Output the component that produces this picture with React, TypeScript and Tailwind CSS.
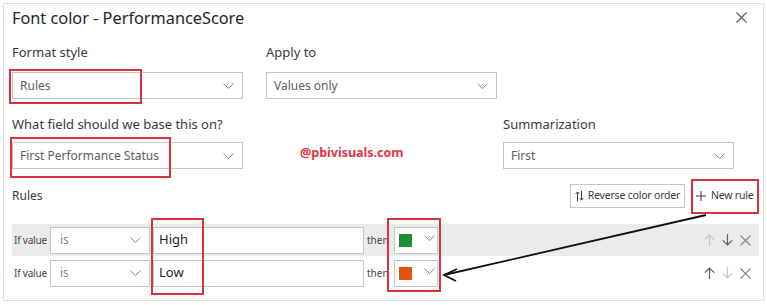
import React from "react";

const Chevron = ({ className = "" }: { className?: string }) => (
  <svg width="11" height="6" viewBox="0 0 11 6" className={className} fill="none" stroke="currentColor" strokeWidth="1">
    <path d="M0.5 0.5 L5.5 5.5 L10.5 0.5" />
  </svg>
);

const Cross = ({ size = 11 }: { size?: number }) => (
  <svg width={size} height={size} viewBox="0 0 11 11" fill="none" stroke="currentColor" strokeWidth="1.2">
    <path d="M0.5 0.5 L10.5 10.5 M10.5 0.5 L0.5 10.5" />
  </svg>
);

const ArrowUp = ({ className = "" }: { className?: string }) => (
  <svg width="11" height="12" viewBox="0 0 11 12" className={className} fill="none" stroke="currentColor" strokeWidth="1.2">
    <path d="M5.5 1 V12 M0.8 5.7 L5.5 1 L10.2 5.7" />
  </svg>
);

const ArrowDown = ({ className = "" }: { className?: string }) => (
  <svg width="11" height="12" viewBox="0 0 11 12" className={className} fill="none" stroke="currentColor" strokeWidth="1.2">
    <path d="M5.5 0 V11 M0.8 6.3 L5.5 11 L10.2 6.3" />
  </svg>
);

function Select({ value }: { value: string }) {
  return (
    <div className="w-[231px] h-[27px] border border-[#c8c6c4] bg-white flex items-center justify-between pl-[7px] pr-[8px] text-[12px] text-[#605e5c]">
      <span>{value}</span>
      <Chevron className="text-[#8a8886]" />
    </div>
  );
}

function RuleRow({ value, color, gray, upOn }: { value: string; color: string; gray?: boolean; upOn: boolean }) {
  return (
    <div className={`h-[32px] flex items-center ${gray ? "bg-[#ebebeb]" : "bg-white"}`}>
      <span className="w-[38px] pl-[2px] whitespace-nowrap text-[10px] tracking-[-0.2px] text-[#484644]">If value</span>
      <div className="w-[100px] h-[27px] border border-[#c8c6c4] bg-white flex items-center justify-between pl-[9px] pr-[8px] text-[12px] text-[#8a8886]">
        <span>is</span>
        <Chevron className="text-[#8a8886]" />
      </div>
      <div className="ml-[3px] w-[211px] h-[27px] border border-[#c8c6c4] bg-white flex items-center pl-[5px] text-[13px] text-[#252423]">
        {value}
      </div>
      <span className="ml-[3px] w-[27px] whitespace-nowrap text-[10px] text-[#484644]">then</span>
      <div className="w-[44px] h-[27px] border border-[#c8c6c4] bg-white flex items-start pl-[4px] pt-[6px] gap-[12px]">
        <div className={`w-[13px] h-[13px] ${color}`} />
        <Chevron className="text-[#8a8886] mt-[1px]" />
      </div>
      <div className="ml-auto mr-[8px] flex items-center gap-[7px]">
        <ArrowUp className={upOn ? "text-[#605e5c]" : "text-[#c8c6c4]"} />
        <ArrowDown className={upOn ? "text-[#c8c6c4]" : "text-[#605e5c]"} />
        <span className="text-[#8a8886]"><Cross size={11} /></span>
      </div>
    </div>
  );
}

export default function App() {
  return (
    <div className="relative w-[767px] h-[305px] bg-white p-[3px] pb-[4px] font-['Segoe_UI','Noto_Sans',sans-serif]">
      <div className="h-full border border-[#e1dfdd] pl-[8px] pr-[4px]">
        <div className="flex items-center justify-between h-[26px] pt-[1px]">
          <h1 className="text-[16.3px] text-[#252423] leading-[24px]">Font color - PerformanceScore</h1>
          <span className="mr-[12px] text-[#605e5c]"><Cross size={11} /></span>
        </div>

        <div className="flex mt-[13px]">
          <div className="w-[230px]">
            <div className="text-[13px] text-[#3b3a39] leading-[18px]">Format style</div>
            <div className="mt-[11px]"><Select value="Rules" /></div>
          </div>
          <div className="ml-[24px] w-[231px]">
            <div className="text-[13px] text-[#3b3a39] leading-[18px]">Apply to</div>
            <div className="mt-[11px]"><Select value="Values only" /></div>
          </div>
        </div>

        <div className="flex mt-[16px]">
          <div className="w-[230px]">
            <div className="text-[13px] text-[#3b3a39] leading-[18px]">What field should we base this on?</div>
            <div className="mt-[9px]"><Select value="First Performance Status" /></div>
          </div>
          <div className="w-[261px] flex items-end pb-[6px] pl-[58px]">
            <span className="text-[12.5px] font-bold text-[#e0353f]">@pbivisuals.com</span>
          </div>
          <div className="w-[231px]">
            <div className="text-[13px] text-[#3b3a39] leading-[18px]">Summarization</div>
            <div className="mt-[9px]"><Select value="First" /></div>
          </div>
        </div>

        <div className="flex items-center justify-between mt-[15px] pr-[2px]">
          <span className="text-[12px] text-[#3b3a39]">Rules</span>
          <div className="flex items-center gap-[8px]">
            <div className="h-[24px] w-[115px] border border-[#c8c6c4] flex items-center justify-center gap-[4px] whitespace-nowrap text-[10.5px] tracking-[-0.2px] text-[#3b3a39]">
              <svg width="9" height="10" viewBox="0 0 9 10" fill="none" stroke="currentColor" strokeWidth="1">
                <path d="M2.5 10 V1 M0.5 3 L2.5 1 L4.5 3 M6.5 0 V9 M4.5 7 L6.5 9 L8.5 7" />
              </svg>
              <span>Reverse color order</span>
            </div>
            <div className="h-[24px] w-[64px] flex items-center justify-start pl-[3px] gap-[5px] whitespace-nowrap text-[10.5px] tracking-[-0.2px] text-[#3b3a39]">
              <svg width="10" height="10" viewBox="0 0 10 10" fill="none" stroke="currentColor" strokeWidth="1">
                <path d="M5 0 V10 M0 5 H10" />
              </svg>
              <span>New rule</span>
            </div>
          </div>
        </div>

        <div className="mt-[16px]">
          <RuleRow value="High" color="bg-[#1b8f35]" gray upOn={false} />
          <div className="h-[1px]" />
          <RuleRow value="Low" color="bg-[#de5410]" upOn />
        </div>
      </div>

      {/* annotations */}
      <div className="absolute left-[9px] top-[69px] w-[133px] h-[35px] border-2 border-[#d8343e]" />
      <div className="absolute left-[10px] top-[137px] w-[161px] h-[41px] border-2 border-[#d8343e]" />
      <div className="absolute left-[691px] top-[179px] w-[68px] h-[35px] border-2 border-[#d8343e]" />
      <div className="absolute left-[151px] top-[218px] w-[53px] h-[77px] border-2 border-[#d8343e]" />
      <div className="absolute left-[387px] top-[218px] w-[54px] h-[74px] border-2 border-[#d8343e]" />
      <svg className="absolute left-0 top-0 pointer-events-none" width="767" height="305" fill="none" stroke="#111" strokeWidth="1.8">
        <path d="M706 215 L444 275" />
        <path d="M457 269 L444 275 L456 281" />
      </svg>
    </div>
  );
}
